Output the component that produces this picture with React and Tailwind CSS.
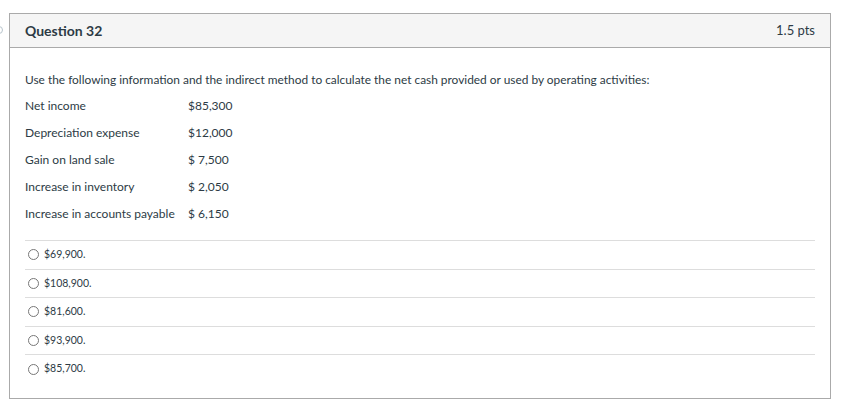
import React from 'react';

const rows = [
  ['Net income', '$85,300'],
  ['Depreciation expense', '$12,000'],
  ['Gain on land sale', '$ 7,500'],
  ['Increase in inventory', '$ 2,050'],
  ['Increase in accounts payable', '$ 6,150'],
];

const answers = ['$69,900.', '$108,900.', '$81,600.', '$93,900.', '$85,700.'];

export default function App() {
  return (
    <div className="relative w-[857px] h-[410px] bg-white text-[#2d3b45]" style={{ fontFamily: 'Lato, "Liberation Sans", sans-serif' }}>
      {/* cut-off marker at left edge */}
      <div className="absolute left-[-5px] top-[26px] w-[8px] h-[8px] rounded-full border border-[#b8c4cc]" />

      <div className="absolute left-[9px] top-[13px] w-[822px] h-[386px] border border-[#aaaaaa]">
        {/* Header */}
        <div className="h-[34px] bg-[#f5f5f5] border-b border-[#aaaaaa] flex items-center justify-between pl-[15px] pr-[15px]">
          <span className="text-[14px] font-bold">Question 32</span>
          <span className="text-[13px]">1.5 pts</span>
        </div>

        {/* Body */}
        <div className="px-[15px] pt-[24px]">
          <p className="text-[11.9px] leading-[16px]">
            Use the following information and the indirect method to calculate the net cash provided or used by operating activities:
          </p>

          <div className="mt-[4px]">
            {rows.map(([label, value]) => (
              <div key={label} className="flex items-center h-[27px] text-[12px]">
                <span className="w-[163px]">{label}</span>
                <span>{value}</span>
              </div>
            ))}
          </div>

          <div className="mt-[13px]">
            {answers.map((a) => (
              <div key={a} className="border-t border-[#dddddd] h-[28.6px] flex items-center pl-[3px]">
                <span className="w-[11px] h-[11px] rounded-full border border-[#777777] mr-[5px]" />
                <span className="text-[10.5px]">{a}</span>
              </div>
            ))}
          </div>
        </div>
      </div>
    </div>
  );
}
